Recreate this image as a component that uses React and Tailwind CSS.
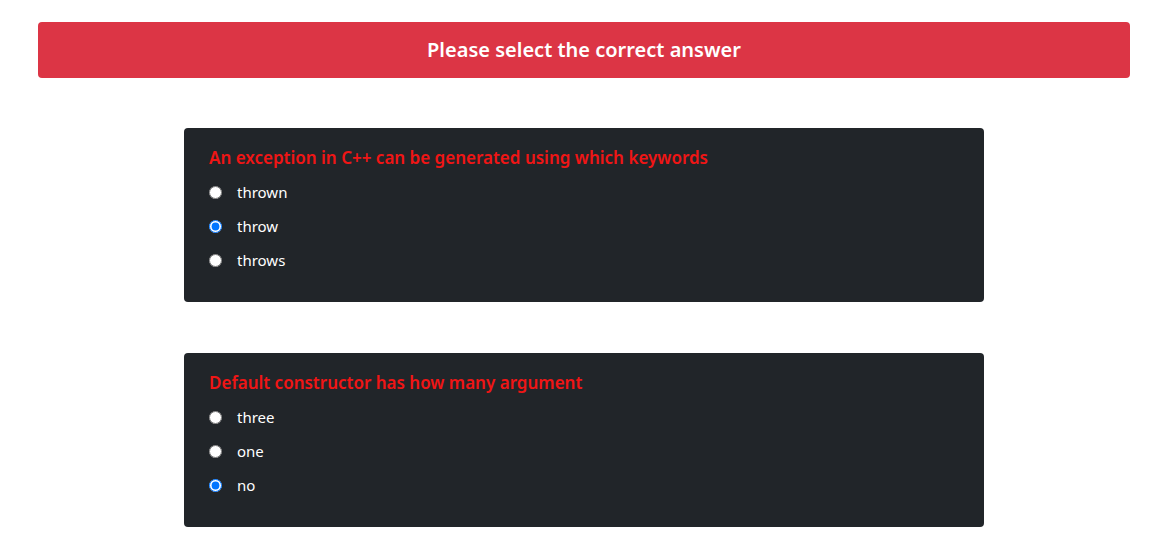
import { useState } from 'react'

const questions = [
  { q: 'An exception in C++ can be generated using which keywords', options: ['thrown', 'throw', 'throws'], picked: 1 },
  { q: 'Default constructor has how many argument', options: ['three', 'one', 'no'], picked: 2 },
]

export default function App() {
  return (
    <div className="min-h-screen bg-white pt-[22px] pl-[38px] pr-[25px]" style={{ fontFamily: '"Noto Sans", "Open Sans", sans-serif' }}>
      <div className="h-[56px] rounded bg-[#dc3545] flex items-center justify-center">
        <h1 className="text-white text-[20px] font-semibold">Please select the correct answer</h1>
      </div>
      <div className="flex flex-col items-center gap-[51px] mt-[50px]">
        {questions.map((item, i) => (
          <QuestionCard key={i} idx={i} {...item} />
        ))}
      </div>
    </div>
  )
}

function QuestionCard({ q, options, picked, idx }) {
  const [sel, setSel] = useState(picked)
  return (
    <div className="w-[800px] h-[174px] rounded bg-[#212529] pt-4 px-[25px]">
      <p className="text-[#f01515] text-[17px] font-semibold leading-[27px] mb-1">{q}</p>
      {options.map((o, j) => (
        <label key={o} className="flex items-center h-[34px] text-white text-[15px]">
          <input
            type="radio"
            name={`q${idx}`}
            checked={sel === j}
            onChange={() => setSel(j)}
            className="w-[13px] h-[13px] m-0 accent-[#0075ff]"
          />
          <span className="ml-[15px]">{o}</span>
        </label>
      ))}
    </div>
  )
}
